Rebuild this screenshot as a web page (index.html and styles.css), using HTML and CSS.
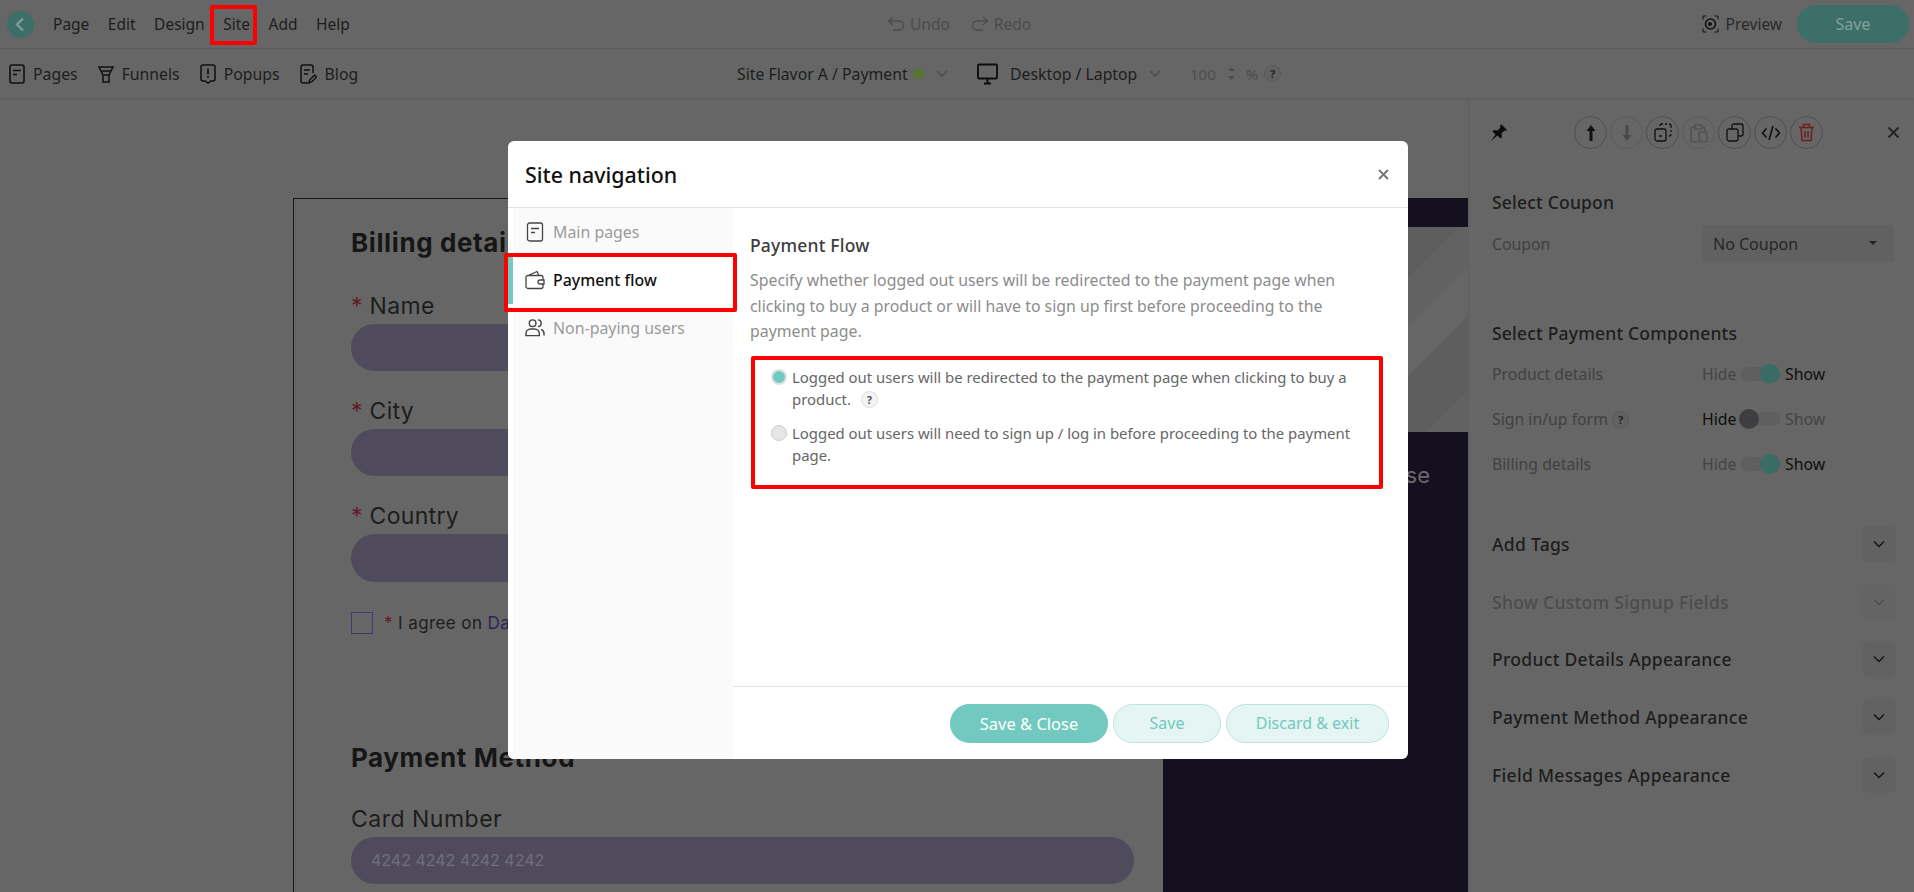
FILE: index.html
```html
<!DOCTYPE html>
<html lang="en">
<head>
    <meta charset="UTF-8">
    <title>Site navigation</title>
    <link rel="stylesheet" href="styles.css">
</head>
<body>
    <header class="topbar">
        <a class="back">
            <svg width="27" height="27" viewBox="0 0 27 27"><circle cx="13.5" cy="13.5" r="13.5" fill="#3c6f68"/><path d="M16 7.5l-6 6 6 6" fill="none" stroke="#7f9c98" stroke-width="2.4"/></svg>
        </a>
        <nav class="menu">
            <a>Page</a>
            <a>Edit</a>
            <a>Design</a>
            <a>Site</a>
            <a>Add</a>
            <a>Help</a>
        </nav>
        <div class="history">
            <span class="history-item">
                <svg width="18" height="16" viewBox="0 0 18 16"><path d="M6 1L1.500 5 6 9M2 5h10a4 4 0 0 1 0 9H6" fill="none" stroke="#4c4c4c" stroke-width="1.300"/></svg>
                Undo
            </span>
            <span class="history-item">
                <svg width="18" height="16" viewBox="0 0 18 16"><path d="M12 1l4.500 4L12 9M16 5H6a4 4 0 0 0 0 9h6" fill="none" stroke="#4c4c4c" stroke-width="1.300"/></svg>
                Redo
            </span>
        </div>
        <div class="top-actions">
            <span class="preview">
                <svg width="17" height="18" viewBox="0 0 17 18"><path d="M1 4.500V1h3.500M12.500 1H16v3.500M16 13.500V17h-3.500M4.500 17H1v-3.500" fill="none" stroke="#111" stroke-width="1"/><circle cx="8.500" cy="9" r="5" fill="none" stroke="#111" stroke-width="1.600"/><circle cx="8" cy="9" r="2" fill="#111"/></svg>
                Preview
            </span>
            <button class="save-top">Save</button>
        </div>
    </header>

    <div class="toolbar">
        <div class="tools">
            <span class="tool">
                <svg width="16" height="22" viewBox="0 0 16 22"><rect x="1" y="2" width="14" height="18" rx="2" fill="none" stroke="#111" stroke-width="1.600"/><path d="M4 7.500h8M4 11.500h4" stroke="#111" stroke-width="1.600"/></svg>
                Pages
            </span>
            <span class="tool">
                <svg width="16" height="22" viewBox="0 0 16 22"><path d="M1 4h14l-4 8H5zM5 12v7h6v-7M3 8h10" fill="none" stroke="#111" stroke-width="1.500"/></svg>
                Funnels
            </span>
            <span class="tool">
                <svg width="16" height="22" viewBox="0 0 16 22"><path d="M3 2h10a2 2 0 0 1 2 2v12a2 2 0 0 1-2 2h-2l-3 2-3-2H3a2 2 0 0 1-2-2V4a2 2 0 0 1 2-2z" fill="none" stroke="#111" stroke-width="1.500"/><path d="M8 5.500v6M8 13v2" stroke="#111" stroke-width="1.700"/></svg>
                Popups
            </span>
            <span class="tool">
                <svg width="17" height="22" viewBox="0 0 17 22"><path d="M8 20H3a2 2 0 0 1-2-2V4a2 2 0 0 1 2-2h8a2 2 0 0 1 2 2v6" fill="none" stroke="#111" stroke-width="1.500"/><path d="M4 7h6M4 11h4" stroke="#111" stroke-width="1.500"/><path d="M9 20l.6-3 5-5 2 2-5 5z" fill="none" stroke="#111" stroke-width="1.400"/></svg>
                Blog
            </span>
        </div>
        <span class="flavor">Site Flavor A / Payment<i class="dot"></i>
            <svg class="caret" width="12" height="7" viewBox="0 0 12 7"><path d="M1 1l5 5 5-5" fill="none" stroke="#4a4a4a" stroke-width="1.300"/></svg>
        </span>
        <span class="device">
            <svg width="21" height="22" viewBox="0 0 21 22"><rect x="1" y="1.500" width="19" height="14" rx="1" fill="none" stroke="#0c0c0c" stroke-width="1.800"/><path d="M7 20.500h7M10.500 16v4" stroke="#0c0c0c" stroke-width="2"/></svg>
            Desktop / Laptop
            <svg class="caret" width="12" height="7" viewBox="0 0 12 7"><path d="M1 1l5 5 5-5" fill="none" stroke="#4a4a4a" stroke-width="1.300"/></svg>
        </span>
        <span class="zoom">
            <span class="zoom-value">100</span>
            <svg width="9" height="15" viewBox="0 0 9 15"><path d="M4.500 1L8 5H1zM4.500 14L1 10h7z" fill="#4e4e4e"/></svg>
            <span class="zoom-unit">%</span>
            <i class="help">?</i>
        </span>
    </div>

    <div class="workspace">
        <main class="canvas">
            <div class="frame">
                <section class="form">
                    <h2 class="form-title">Billing details</h2>
                    <label class="field-label first"><b>*</b> Name</label>
                    <div class="input"></div>
                    <label class="field-label"><b>*</b> City</label>
                    <div class="input"></div>
                    <label class="field-label"><b>*</b> Country</label>
                    <div class="input tall"></div>
                    <div class="agree"><i class="check"></i><span><b>*</b> I agree on <em>Data</em></span></div>
                    <h2 class="form-title method">Payment Method</h2>
                    <label class="field-label card">Card Number</label>
                    <div class="input">4242 4242 4242 4242</div>
                </section>
                <aside class="summary">
                    <div class="summary-top"></div>
                    <div class="summary-stripes"></div>
                    <div class="summary-text"><span>se</span></div>
                </aside>
            </div>
        </main>

        <aside class="panel">
            <div class="panel-tools">
                <svg class="pin" width="18" height="19" viewBox="0 0 18 19"><path d="M11 1l6 6-1.500 1-1-.5-3 3 .5 3.500-1.500 1.500-3-3L1 18l4.500-6.500-3-3L4 7l3.500.5 3-3-.5-1z" fill="#0c0c0c"/></svg>
                <div class="circles">
                    <span class="circle"><svg width="16" height="18" viewBox="0 0 16 18"><path d="M8 1l4.500 6H9.500v10h-3V7h-3z" fill="#111"/></svg></span>
                    <span class="circle off"><svg width="16" height="18" viewBox="0 0 16 18"><path d="M8 17l4.500-6H9.500V1h-3v10h-3z" fill="#4a4a4a"/></svg></span>
                    <span class="circle"><svg width="18" height="19" viewBox="0 0 18 19"><rect x="1" y="6" width="11" height="12" rx="2" fill="none" stroke="#111" stroke-width="1.300"/><path d="M6 3V2.500A1.500 1.500 0 0 1 7.500 1H9M11 1h2M15 1a2 2 0 0 1 2 2v2M17 7v2M17 11a2 2 0 0 1-2 2M5 13h3" fill="none" stroke="#111" stroke-width="1.300"/></svg></span>
                    <span class="circle off"><svg width="18" height="20" viewBox="0 0 18 20"><path d="M5 4H3a2 2 0 0 0-2 2v11a2 2 0 0 0 2 2h4M12 4h1a2 2 0 0 1 2 2v3" fill="none" stroke="#4c4c4c" stroke-width="1.200"/><rect x="5" y="2" width="7" height="4" rx="1" fill="none" stroke="#4c4c4c" stroke-width="1.200"/><rect x="9" y="9" width="8" height="10" rx="1.500" fill="none" stroke="#4c4c4c" stroke-width="1.200"/></svg></span>
                    <span class="circle"><svg width="18" height="19" viewBox="0 0 18 19"><rect x="1" y="6" width="11" height="12" rx="2" fill="none" stroke="#111" stroke-width="1.300"/><path d="M6 6V3a2 2 0 0 1 2-2h7a2 2 0 0 1 2 2v8a2 2 0 0 1-2 2h-3" fill="none" stroke="#111" stroke-width="1.300"/></svg></span>
                    <span class="circle"><svg width="20" height="16" viewBox="0 0 20 16"><path d="M5.500 3.500L1.500 8l4 4.500M14.500 3.500l4 4.500-4 4.500M12 1L8 15" fill="none" stroke="#111" stroke-width="1.600"/></svg></span>
                    <span class="circle"><svg width="17" height="19" viewBox="0 0 17 19"><path d="M1 4.500h15M3 4.500l1 13h9l1-13M5.500 4.500V1.500h6v3M7 8v6.500M10 8v6.500" fill="none" stroke="#6f1f1f" stroke-width="1.500"/></svg></span>
                </div>
                <svg class="panel-close" width="13" height="13" viewBox="0 0 13 13"><path d="M1.500 1.500l10 10M11.500 1.500l-10 10" stroke="#222" stroke-width="1.800"/></svg>
            </div>

            <h3 class="panel-title coupon-title">Select Coupon</h3>
            <div class="coupon-row">
                <span class="row-label">Coupon</span>
                <div class="dropdown">No Coupon<i class="drop-arrow"></i></div>
            </div>

            <h3 class="panel-title components-title">Select Payment Components</h3>
            <div class="rows">
                <div class="comp-row">
                    <span class="row-label">Product details</span>
                    <span class="choice">Hide</span>
                    <span class="switch on"><i></i></span>
                    <span class="choice active">Show</span>
                </div>
                <div class="comp-row">
                    <span class="row-label">Sign in/up form <i class="help">?</i></span>
                    <span class="choice active">Hide</span>
                    <span class="switch"><i></i></span>
                    <span class="choice">Show</span>
                </div>
                <div class="comp-row">
                    <span class="row-label">Billing details</span>
                    <span class="choice">Hide</span>
                    <span class="switch on"><i></i></span>
                    <span class="choice active">Show</span>
                </div>
            </div>

            <div class="accordions">
                <div class="accordion"><span>Add Tags</span><i class="chev-box"><svg width="12" height="8" viewBox="0 0 12 8"><path d="M1 1.500l5 5 5-5" fill="none" stroke="#111" stroke-width="1.300"/></svg></i></div>
                <div class="accordion muted"><span>Show Custom Signup Fields</span><i class="chev-box"><svg width="12" height="8" viewBox="0 0 12 8"><path d="M1 1.500l5 5 5-5" fill="none" stroke="#4c4c4c" stroke-width="1.300"/></svg></i></div>
                <div class="accordion"><span>Product Details Appearance</span><i class="chev-box"><svg width="12" height="8" viewBox="0 0 12 8"><path d="M1 1.500l5 5 5-5" fill="none" stroke="#111" stroke-width="1.300"/></svg></i></div>
                <div class="accordion"><span>Payment Method Appearance</span><i class="chev-box"><svg width="12" height="8" viewBox="0 0 12 8"><path d="M1 1.500l5 5 5-5" fill="none" stroke="#111" stroke-width="1.300"/></svg></i></div>
                <div class="accordion"><span>Field Messages Appearance</span><i class="chev-box"><svg width="12" height="8" viewBox="0 0 12 8"><path d="M1 1.500l5 5 5-5" fill="none" stroke="#111" stroke-width="1.300"/></svg></i></div>
            </div>
        </aside>
    </div>

    <div class="modal">
        <div class="modal-head">
            <h1>Site navigation</h1>
            <svg width="11" height="11" viewBox="0 0 11 11"><path d="M1 1l9 9M10 1l-9 9" stroke="#777" stroke-width="2"/></svg>
        </div>
        <div class="modal-body">
            <ul class="side">
                <li>
                    <svg width="20" height="22" viewBox="0 0 20 22"><rect x="2.500" y="2" width="15" height="18" rx="2" fill="none" stroke="#444" stroke-width="1.300"/><path d="M6 7.500h8M6 11.500h4" stroke="#444" stroke-width="1.300"/></svg>
                    Main pages
                </li>
                <li class="current">
                    <svg width="20" height="20" viewBox="0 0 20 20"><path d="M3 5.500h13a2 2 0 0 1 2 2v9a2 2 0 0 1-2 2H3a2 2 0 0 1-2-2V7.500a2 2 0 0 1 2-2zM3 5.500l9-4 2 4" fill="none" stroke="#444" stroke-width="1.300"/><path d="M19 10h-4a2 2 0 0 0 0 4h4z" fill="#fff" stroke="#444" stroke-width="1.300"/></svg>
                    Payment flow
                </li>
                <li>
                    <svg width="20" height="20" viewBox="0 0 21 20"><circle cx="8" cy="5" r="3.500" fill="none" stroke="#444" stroke-width="1.500"/><path d="M1 18v-2a5 5 0 0 1 5-5h4a5 5 0 0 1 5 5v2zM13.500 1.500a3.500 3.500 0 0 1 0 7M17 11.500a5 5 0 0 1 3 4.500v2" fill="none" stroke="#444" stroke-width="1.500"/></svg>
                    Non-paying users
                </li>
            </ul>
            <div class="modal-main">
                <div class="flow">
                    <h2>Payment Flow</h2>
                    <p>Specify whether logged out users will be redirected to the payment page when clicking to buy a product or will have to sign up first before proceeding to the payment page.</p>
                    <div class="option">
                        <i class="radio checked"></i>
                        <span>Logged out users will be redirected to the payment page when clicking to buy a product. <i class="help light">?</i></span>
                    </div>
                    <div class="option">
                        <i class="radio"></i>
                        <span>Logged out users will need to sign up / log in before proceeding to the payment page.</span>
                    </div>
                </div>
                <div class="modal-foot">
                    <button class="btn primary">Save &amp; Close</button>
                    <button class="btn soft save">Save</button>
                    <button class="btn soft discard">Discard &amp; exit</button>
                </div>
            </div>
        </div>
    </div>

    <div class="mark mark-site"></div>
    <div class="mark mark-side"></div>
    <div class="mark mark-options"></div>
</body>
</html>
```

FILE: styles.css
```css
* {
    box-sizing: border-box;
}
body {
    margin: 0;
    width: 1914px;
    height: 892px;
    overflow: hidden;
    position: relative;
    display: flex;
    flex-direction: column;
    background: #666;
    color: #1d1d1d;
    font-family: "Noto Sans", sans-serif;
    font-size: 15.500px;
}
i {
    font-style: normal;
}

/* top bar */
.topbar {
    height: 49px;
    flex: none;
    display: flex;
    align-items: center;
    border-bottom: 1px solid #5c5c5c;
    padding-left: 7px;
}
.back {
    display: flex;
    width: 27px;
}
.menu {
    display: flex;
    gap: 18.500px;
    margin-left: 19px;
    width: 834px;
}
.history {
    display: flex;
    gap: 21px;
    color: #4c4c4c;
}
.history-item {
    display: flex;
    align-items: center;
    gap: 5px;
}
.top-actions {
    margin-left: auto;
    display: flex;
    align-items: center;
    padding-right: 5px;
}
.preview {
    display: flex;
    align-items: center;
    gap: 7px;
    color: #2a2a2a;
    margin-right: 15px;
}
.save-top {
    width: 112px;
    height: 38px;
    border: none;
    border-radius: 19px;
    background: #3c6f68;
    color: #84a19d;
    font: inherit;
    font-size: 16px;
}

/* second bar */
.toolbar {
    height: 49px;
    flex: none;
    display: flex;
    align-items: center;
    padding-left: 9px;
    font-size: 15.800px;
    box-shadow: 0 1px 2px rgba(0, 0, 0, 0.08);
}
.tools {
    display: flex;
    gap: 20px;
    width: 728px;
}
.tool {
    display: flex;
    align-items: center;
    gap: 8px;
}
.flavor {
    display: flex;
    align-items: center;
    width: 240px;
}
.dot {
    width: 11px;
    height: 11px;
    border-radius: 50%;
    background: #55762f;
    margin: 0 12px 0 5px;
}
.device {
    display: flex;
    align-items: center;
    gap: 12px;
    width: 213px;
}
.zoom {
    display: flex;
    align-items: center;
    color: #4d4d4d;
    font-size: 15px;
}
.zoom-value {
    margin-right: 11px;
}
.zoom-unit {
    margin: 0 6px 0 10px;
}
.help {
    display: inline-flex;
    align-items: center;
    justify-content: center;
    width: 17px;
    height: 17px;
    border-radius: 50%;
    border: 1px solid #595959;
    background: #626262;
    color: #222;
    font-size: 11px;
    font-weight: 700;
    vertical-align: 1px;
}
.help.light {
    background: #f4f4f4;
    border-color: #ddd;
    color: #555;
    margin-left: 6px;
}

/* page being edited */
.workspace {
    flex: 1;
    display: flex;
    min-height: 0;
}
.canvas {
    width: 1468px;
    flex: none;
    padding: 100px 0 0 293px;
    overflow: hidden;
}
.frame {
    display: flex;
    height: 700px;
    border: 1px solid #161616;
    border-right: none;
    border-bottom: none;
}
.form {
    width: 869px;
    flex: none;
    padding: 29px 29px 0 57px;
    font-family: "Inter", sans-serif;
}
.form-title {
    margin: 0;
    width: fit-content;
    font-size: 26px;
    letter-spacing: 0.600px;
    line-height: 30px;
    font-weight: 700;
    color: #161616;
}
.field-label {
    display: block;
    width: fit-content;
    margin-top: 23px;
    height: 35px;
    line-height: 35px;
    font-size: 23px;
    letter-spacing: 0.300px;
    color: #1d1d1d;
}
.field-label.first {
    margin-top: 31px;
}
.field-label b {
    color: #5e1c2a;
    font-weight: 400;
}
.field-label.card {
    margin-top: 29px;
    letter-spacing: 0.500px;
}
.input {
    height: 47px;
    border-radius: 24px;
    background: #4f4b5c;
    padding-left: 20px;
    line-height: 46px;
    font-size: 16px;
    color: #716e7c;
}
.input.tall {
    height: 48px;
}
.agree {
    margin-top: 30px;
    display: flex;
    align-items: center;
    gap: 11px;
    font-size: 17px;
    letter-spacing: 0.400px;
    height: 22px;
}
.agree b {
    color: #5e1c2a;
    font-weight: 400;
}
.agree em {
    font-style: normal;
    color: #2c2452;
}
.check {
    width: 22px;
    height: 22px;
    border: 1px solid #44366f;
}
.form-title.method {
    margin-top: 109px;
}
.summary {
    width: 305px;
    flex: none;
    background: #151020;
}
.summary-top {
    height: 28px;
}
.summary-stripes {
    height: 205px;
    background: repeating-linear-gradient(135deg, #666 0 34px, #5e5e5e 34px 88px, #626262 88px 122px);
}
.summary-text {
    margin-top: 28px;
    text-align: right;
    padding-right: 38px;
    font-family: "Inter", sans-serif;
    font-size: 22px;
    line-height: 30px;
    color: #6b6870;
}

/* right panel */
.panel {
    flex: 1;
    border-left: 1px solid #5e5e5e;
    padding: 18px 0 0 23px;
    font-size: 15.800px;
}
.panel-tools {
    display: flex;
    align-items: center;
    height: 33px;
}
.pin {
    margin-left: -2px;
}
.circles {
    display: flex;
    gap: 3px;
    margin-left: 66px;
}
.circle {
    width: 33px;
    height: 33px;
    border-radius: 50%;
    border: 1px solid #4e4e4e;
    display: flex;
    align-items: center;
    justify-content: center;
}
.circle.off {
    border-color: #5c5c5c;
}
.panel-close {
    margin-left: auto;
    margin-right: 14px;
}
.panel-title {
    margin: 0;
    font-size: 17.500px;
    letter-spacing: 0.200px;
    line-height: 24px;
    font-weight: 500;
    color: #1d1d1d;
}
.coupon-title {
    margin-top: 41px;
}
.coupon-row {
    display: flex;
    align-items: center;
    margin-top: 11px;
}
.row-label {
    width: 210px;
    flex: none;
    color: #414141;
}
.dropdown {
    width: 192px;
    height: 37px;
    background: #616161;
    border-radius: 4px;
    padding-left: 11px;
    line-height: 39px;
    font-size: 16px;
    color: #262626;
    position: relative;
}
.drop-arrow {
    position: absolute;
    right: 17px;
    top: 16px;
    border: 4px solid transparent;
    border-top-color: #222;
}
.components-title {
    margin-top: 59px;
}
.rows {
    margin-top: 6px;
}
.comp-row {
    display: flex;
    align-items: center;
    height: 45px;
}
.choice {
    width: 39px;
    color: #444;
}
.choice.active {
    color: #0e0e0e;
}
.switch {
    width: 39px;
    height: 14px;
    border-radius: 7px;
    background: #5f5f5f;
    display: flex;
    align-items: center;
    margin-right: 5px;
}
.switch i {
    width: 20px;
    height: 20px;
    border-radius: 50%;
    background: #3e3e40;
    margin-left: -2px;
}
.switch.on {
    justify-content: flex-end;
}
.switch.on i {
    background: #3a6b64;
    margin: 0;
}
.accordions {
    margin-top: 40px;
    display: flex;
    flex-direction: column;
    gap: 21.700px;
    padding-right: 18px;
}
.accordion {
    height: 36px;
    display: flex;
    align-items: center;
    justify-content: space-between;
    font-size: 17.500px;
    letter-spacing: 0.300px;
    font-weight: 500;
}
.accordion.muted {
    color: #4c4c4c;
}
.chev-box {
    width: 34px;
    height: 36px;
    border-radius: 7px;
    background: #626262;
    display: flex;
    align-items: center;
    justify-content: center;
}
.accordion.muted .chev-box {
    background: #646464;
}

/* modal */
.modal {
    position: absolute;
    left: 508px;
    top: 141px;
    width: 900px;
    height: 618px;
    background: #fff;
    border-radius: 6px;
    display: flex;
    flex-direction: column;
    overflow: hidden;
}
.modal-head {
    height: 67px;
    flex: none;
    display: flex;
    align-items: center;
    justify-content: space-between;
    padding: 0 19px 0 17px;
    border-bottom: 1px solid #e3e3e3;
}
.modal-head h1 {
    margin: 0;
    font-size: 21.400px;
    font-weight: 500;
    color: #111;
}
.modal-body {
    flex: 1;
    display: flex;
    min-height: 0;
}
.side {
    list-style: none;
    margin: 0;
    padding: 0;
    width: 225px;
    flex: none;
    background: #fafafa;
    border-left: 5px solid #fff;
    font-size: 15.900px;
}
.side li {
    height: 48px;
    display: flex;
    align-items: center;
    gap: 8px;
    padding-left: 12px;
    color: #9a9a9a;
}
.side li.current {
    margin-left: -5px;
    border-left: 5px solid #72c9bf;
    background: #fff;
    color: #111;
    font-weight: 500;
}
.modal-main {
    flex: 1;
    display: flex;
    flex-direction: column;
}
.flow {
    flex: 1;
    padding: 25px 23px 0 17px;
}
.flow h2 {
    margin: 0;
    font-size: 17.500px;
    letter-spacing: 0.200px;
    line-height: 24px;
    font-weight: 500;
    color: #3d3d3d;
}
.flow p {
    margin: 11px 0 21px;
    font-size: 15.850px;
    line-height: 25.500px;
    color: #8c8c8c;
}
.option {
    display: flex;
    gap: 5px;
    padding-left: 21px;
    margin-bottom: 12px;
    font-size: 14.900px;
    line-height: 22px;
    color: #666;
}
.radio {
    width: 16px;
    height: 16px;
    flex: none;
    margin-top: 3px;
    border-radius: 50%;
    border: 1px solid #ccc;
    background: #e6e6e6;
}
.radio.checked {
    background: #72c9bf;
    border: 2px solid #e0e0e0;
}
.modal-foot {
    height: 73px;
    flex: none;
    display: flex;
    align-items: center;
    justify-content: flex-end;
    gap: 5px;
    padding-right: 19px;
    border-top: 1px solid #e3e3e3;
}
.btn {
    height: 39px;
    border-radius: 20px;
    font: inherit;
    font-size: 16px;
}
.btn.primary {
    width: 158px;
    border: none;
    background: #72c9bf;
    color: #fff;
    font-size: 16.500px;
}
.btn.soft {
    border: 1px solid #b9e6e0;
    background: #e4f5f3;
    color: #72c9bf;
}
.btn.save {
    width: 108px;
}
.btn.discard {
    width: 163px;
}

/* red annotations */
.mark {
    position: absolute;
    border: 4px solid #f00;
    border-radius: 2px;
}
.mark-site {
    left: 210px;
    top: 5px;
    width: 47px;
    height: 40px;
}
.mark-side {
    left: 504px;
    top: 253px;
    width: 233px;
    height: 59px;
}
.mark-options {
    left: 751px;
    top: 356px;
    width: 632px;
    height: 133px;
}
```
